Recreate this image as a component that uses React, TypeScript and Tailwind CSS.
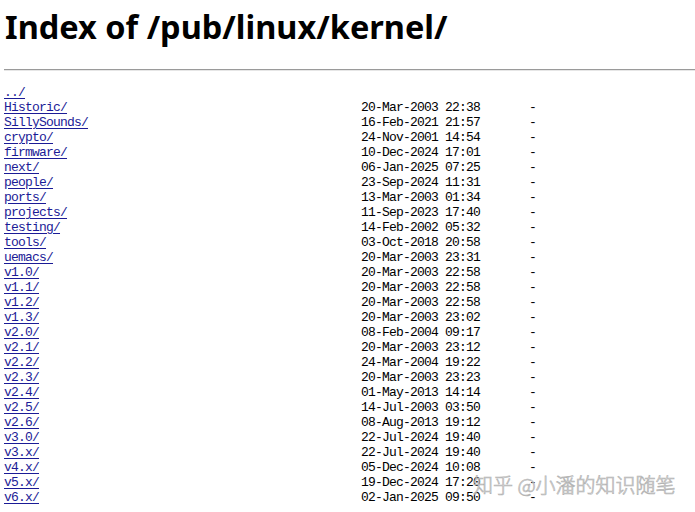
import React from "react";

const rows: [string, string][] = [
  ["../", ""],
  ["Historic/", "20-Mar-2003 22:38"],
  ["SillySounds/", "16-Feb-2021 21:57"],
  ["crypto/", "24-Nov-2001 14:54"],
  ["firmware/", "10-Dec-2024 17:01"],
  ["next/", "06-Jan-2025 07:25"],
  ["people/", "23-Sep-2024 11:31"],
  ["ports/", "13-Mar-2003 01:34"],
  ["projects/", "11-Sep-2023 17:40"],
  ["testing/", "14-Feb-2002 05:32"],
  ["tools/", "03-Oct-2018 20:58"],
  ["uemacs/", "20-Mar-2003 23:31"],
  ["v1.0/", "20-Mar-2003 22:58"],
  ["v1.1/", "20-Mar-2003 22:58"],
  ["v1.2/", "20-Mar-2003 22:58"],
  ["v1.3/", "20-Mar-2003 23:02"],
  ["v2.0/", "08-Feb-2004 09:17"],
  ["v2.1/", "20-Mar-2003 23:12"],
  ["v2.2/", "24-Mar-2004 19:22"],
  ["v2.3/", "20-Mar-2003 23:23"],
  ["v2.4/", "01-May-2013 14:14"],
  ["v2.5/", "14-Jul-2003 03:50"],
  ["v2.6/", "08-Aug-2013 19:12"],
  ["v3.0/", "22-Jul-2024 19:40"],
  ["v3.x/", "22-Jul-2024 19:40"],
  ["v4.x/", "05-Dec-2024 10:08"],
  ["v5.x/", "19-Dec-2024 17:20"],
  ["v6.x/", "02-Jan-2025 09:50"],
];

export default function App() {
  return (
    <div className="relative w-[695px] h-[512px] overflow-hidden bg-white text-black">
      <h1 className="pl-[5px] pt-[7px] h-[69px] text-[32.5px] leading-[40px] font-bold font-['Noto_Sans',sans-serif] text-black">
        Index of /pub/linux/kernel/
      </h1>
      <div className="ml-[4px] border-t border-t-[#9a9a9a] border-b border-b-[#e6e6e6]" />
      <div className="mt-[14px] pl-[4px] font-['Liberation_Mono',monospace] text-[13px] leading-[15px] tracking-[-0.8px] whitespace-pre">
        {rows.map(([name, date], i) => (
          <div key={i} className="flex h-[15px]">
            <div className="w-[357px]">
              <a href="#" className="text-[#1b1b96] underline underline-offset-2">
                {name}
              </a>
            </div>
            {date ? (
              <>
                <div className="w-[168px]">{date}</div>
                <div>-</div>
              </>
            ) : null}
          </div>
        ))}
      </div>
      <div className="absolute left-[473px] top-[472px] text-[20px] leading-[26px] text-white font-['Noto_Sans_CJK_SC',sans-serif] font-light [-webkit-text-stroke:0.7px_#ababab] opacity-90 whitespace-nowrap">
        知乎 @小潘的知识随笔
      </div>
    </div>
  );
}
